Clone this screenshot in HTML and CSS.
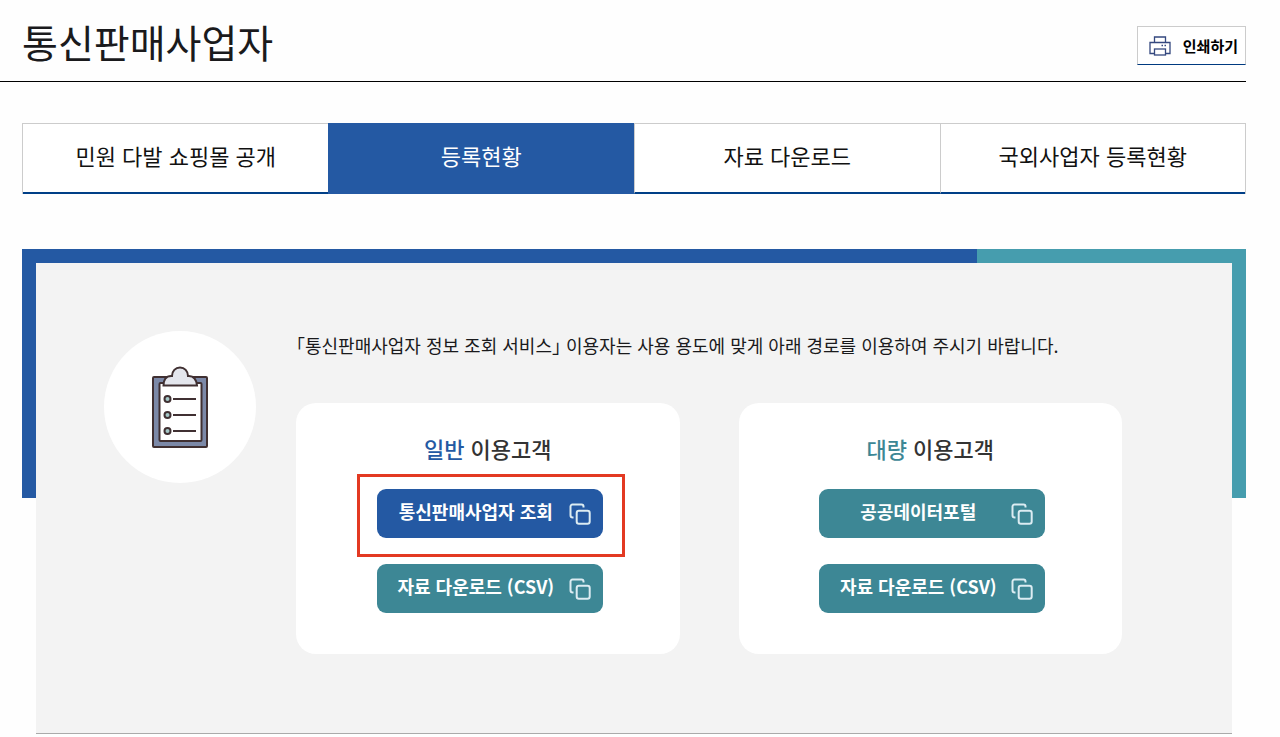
FILE: index.html
```html
<!DOCTYPE html>
<html lang="ko">
<head>
    <meta charset="UTF-8">
    <meta name="viewport" content="width=device-width, initial-scale=1.0">
    <title>통신판매사업자 등록현황</title>
    <link rel="stylesheet" href="styles.css">
</head>
<body>
    <!-- shared icon for links that open a new window -->
    <svg class="sprite" aria-hidden="true">
        <symbol id="icon-window" viewBox="0 0 22 22">
            <path d="M4.500 14.500H3.800a2.300 2.300 0 0 1-2.300-2.300V3.500a2 2 0 0 1 2-2h9a2 2 0 0 1 2 2v1" />
            <rect x="7.700" y="7.700" width="13" height="13" rx="2.200" />
        </symbol>
    </svg>

    <header class="page-header">
        <h1>통신판매사업자</h1>
        <button type="button" class="print-button" onclick="window.print()">
            <svg class="print-icon" viewBox="0 0 22 20" aria-hidden="true">
                <path d="M5.500 6.500V1h11v5.500M5 17.500H1v-11h20v11h-4" />
                <rect x="5.500" y="13" width="11" height="6" />
                <path d="M12.500 9.500h1.500M15.500 9.500h1.500" />
            </svg>
            인쇄하기
        </button>
    </header>

    <main>
        <nav class="tabs">
            <a href="#complaints">민원 다발 쇼핑몰 공개</a>
            <a href="#status" class="active" aria-current="page">등록현황</a>
            <a href="#download">자료 다운로드</a>
            <a href="#overseas">국외사업자 등록현황</a>
        </nav>

        <section class="guide">
            <div class="guide-inner">
                <div class="guide-icon">
                    <svg viewBox="0 0 60 84" aria-hidden="true">
                        <rect class="board" x="3" y="12" width="54" height="70" rx="1" />
                        <rect class="paper" x="9.500" y="18" width="42" height="58" rx="1" />
                        <path class="clip" d="M13.500 20.500c0-5 2-10 8.500-9.500 0-5 3.500-8.500 8-8.500s8 3.500 8 8.500c6.500-.5 8.500 4.500 9 9.500z" />
                        <circle class="bullet" cx="17.500" cy="34" r="3" />
                        <circle class="bullet" cx="17.500" cy="50" r="3" />
                        <circle class="bullet" cx="17.500" cy="66" r="3" />
                        <path class="line" d="M23 34h23M23 50h23M23 66h23" />
                    </svg>
                </div>

                <div class="guide-content">
                    <p class="description">「통신판매사업자 정보 조회 서비스」 이용자는 사용 용도에 맞게 아래 경로를 이용하여 주시기 바랍니다.</p>
                    <div class="cards">
                        <div class="card">
                            <h2><span class="blue">일반</span> 이용고객</h2>
                            <div class="highlight">
                                <a href="#search" class="link-button primary">
                                    <span>통신판매사업자 조회</span>
                                    <svg class="window-icon" aria-hidden="true"><use href="#icon-window" /></svg>
                                </a>
                            </div>
                            <a href="#csv" class="link-button">
                                <span>자료 다운로드 (CSV)</span>
                                <svg class="window-icon" aria-hidden="true"><use href="#icon-window" /></svg>
                            </a>
                        </div>
                        <div class="card">
                            <h2><span class="teal">대량</span> 이용고객</h2>
                            <a href="#portal" class="link-button">
                                <span>공공데이터포털</span>
                                <svg class="window-icon" aria-hidden="true"><use href="#icon-window" /></svg>
                            </a>
                            <a href="#bulk-csv" class="link-button">
                                <span>자료 다운로드 (CSV)</span>
                                <svg class="window-icon" aria-hidden="true"><use href="#icon-window" /></svg>
                            </a>
                        </div>
                    </div>
                </div>
            </div>
        </section>
    </main>
</body>
</html>
```
FILE: styles.css
```css
* {
    box-sizing: border-box;
}

body {
    margin: 0;
    background-color: #fefefe;
    color: #1a1a1c;
    font-family: 'Noto Sans CJK KR', sans-serif;
}

a {
    text-decoration: none;
}

svg {
    display: block;
    fill: none;
}

.sprite {
    display: none;
}

.page-header {
    display: flex;
    justify-content: space-between;
    align-items: flex-start;
    margin-right: 34px;
    padding: 5px 0 4px 22px;
    border-bottom: 1px solid #000;
}

h1 {
    margin: 0;
    font-size: 39px;
    font-weight: 400;
    line-height: 72px;
}

.print-button {
    display: flex;
    align-items: center;
    gap: 12px;
    height: 39px;
    margin-top: 21px;
    padding: 0 7px 0 11px;
    background-color: #fff;
    border: 1px solid #ccc;
    border-bottom: 1px solid #003a80;
    color: #000;
    font-family: inherit;
    font-size: 15px;
    font-weight: 700;
    line-height: 20px;
    cursor: pointer;
}

.print-icon {
    width: 22px;
    height: 20px;
    stroke: #34487f;
    stroke-width: 1.3;
}

main {
    padding: 41px 34px 0 22px;
}

.tabs {
    display: grid;
    grid-template-columns: repeat(4, 1fr);
    background-color: #fff;
    border: 1px solid #ccc;
    border-bottom: none;
}

.tabs a {
    height: 70px;
    border-bottom: 2px solid #003f87;
    color: #111;
    font-size: 22px;
    line-height: 62px;
    text-align: center;
}

.tabs a + a {
    border-left: 1px solid #ccc;
}

.tabs a.active {
    margin: -1px 0 0 -1px;
    height: 71px;
    background-color: #2459a3;
    border-color: #2459a3;
    color: #fff;
    line-height: 64px;
}

/* two-colour frame round the upper part of the box */
.guide {
    margin-top: 55px;
    padding: 14px 14px 0;
    background: linear-gradient(to right, #2459a3 78%, #469dae 78%) no-repeat top / 100% 249px;
}

.guide-inner {
    display: flex;
    gap: 40px;
    padding: 68px 110px 79px 68px;
    background-color: #f3f3f3;
    border-bottom: 1px solid #aaa;
}

.guide-icon {
    display: flex;
    flex: none;
    justify-content: center;
    align-items: center;
    width: 152px;
    height: 152px;
    border-radius: 50%;
    background-color: #fff;
}

.guide-icon svg {
    width: 60px;
    height: 84px;
    stroke: #403032;
    stroke-width: 2;
}

.board {
    fill: #7c89a8;
}

.paper {
    fill: #fff;
}

.clip {
    fill: #e4e6ed;
}

.bullet {
    fill: #a5c8c8;
}

.guide-content {
    flex: 1;
}

.description {
    margin: 0 0 44px;
    font-size: 18px;
    line-height: 28px;
    /* half-width corner brackets */
    font-feature-settings: 'halt';
}

.cards {
    display: flex;
    gap: 59px;
}

.card {
    display: flex;
    flex: 1;
    flex-direction: column;
    align-items: center;
    gap: 26px;
    padding: 30px 0 41px 4px;
    border-radius: 20px;
    background-color: #fff;
}

h2 {
    margin: 0;
    padding-right: 4px;
    color: #333;
    font-size: 22px;
    font-weight: 500;
    line-height: 30px;
}

.blue {
    color: #2459a3;
}

.teal {
    color: #3d8795;
}

.link-button {
    display: flex;
    align-items: center;
    width: 226px;
    height: 49px;
    padding: 0 12px;
    border-radius: 9px;
    background-color: #3d8795;
    color: #fff;
    font-size: 18px;
    font-weight: 700;
}

.link-button span {
    flex: 1;
    padding: 0 6px 5px 0;
    text-align: center;
    white-space: nowrap;
}

.primary {
    background-color: #2459a3;
}

.window-icon {
    flex: none;
    width: 22px;
    height: 22px;
    stroke: #dcecf2;
    stroke-width: 2;
}

.highlight {
    position: relative;
}

.highlight::after {
    content: '';
    position: absolute;
    inset: -15px -22px -19px -20px;
    border: 3px solid #e33922;
    pointer-events: none;
}
```
